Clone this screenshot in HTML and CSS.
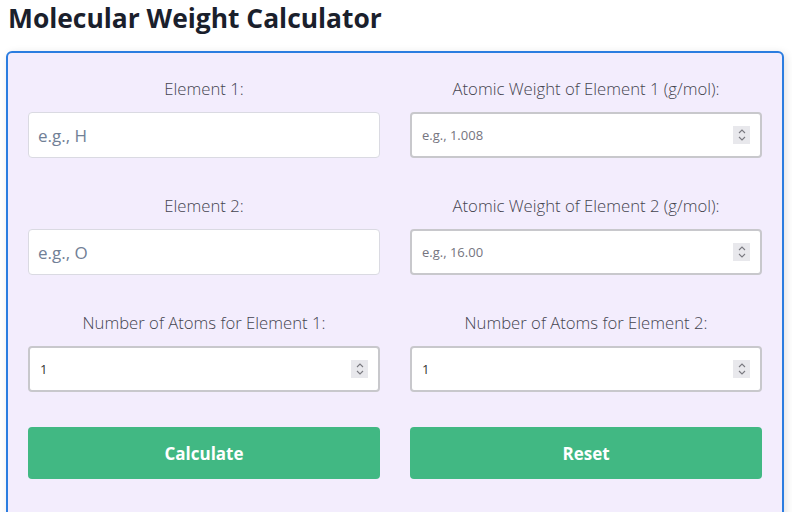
FILE: index.html
```
<!DOCTYPE html>
<html>
<head>
<meta charset="utf-8">
<link rel="stylesheet" href="styles.css">
</head>
<body>
<h1 class="title">Molecular Weight Calculator</h1>
<div class="card">
  <div class="grid">
    <div class="field">
      <label class="label">Element 1:</label>
      <input class="text-input" type="text" placeholder="e.g., H">
    </div>
    <div class="field">
      <label class="label">Atomic Weight of Element 1 (g/mol):</label>
      <div class="num-wrap">
        <input class="num-input" type="text" placeholder="e.g., 1.008">
        <span class="spin"><svg width="10" height="14" viewBox="0 0 10 14"><path d="M2 5 L5 2 L8 5 M2 9 L5 12 L8 9" fill="none" stroke="#7a7a80" stroke-width="1.1"/></svg></span>
      </div>
    </div>
    <div class="field">
      <label class="label">Element 2:</label>
      <input class="text-input" type="text" placeholder="e.g., O">
    </div>
    <div class="field">
      <label class="label">Atomic Weight of Element 2 (g/mol):</label>
      <div class="num-wrap">
        <input class="num-input" type="text" placeholder="e.g., 16.00">
        <span class="spin"><svg width="10" height="14" viewBox="0 0 10 14"><path d="M2 5 L5 2 L8 5 M2 9 L5 12 L8 9" fill="none" stroke="#7a7a80" stroke-width="1.1"/></svg></span>
      </div>
    </div>
    <div class="field">
      <label class="label">Number of Atoms for Element 1:</label>
      <div class="num-wrap">
        <input class="num-input" type="text" value="1">
        <span class="spin"><svg width="10" height="14" viewBox="0 0 10 14"><path d="M2 5 L5 2 L8 5 M2 9 L5 12 L8 9" fill="none" stroke="#7a7a80" stroke-width="1.1"/></svg></span>
      </div>
    </div>
    <div class="field">
      <label class="label">Number of Atoms for Element 2:</label>
      <div class="num-wrap">
        <input class="num-input" type="text" value="1">
        <span class="spin"><svg width="10" height="14" viewBox="0 0 10 14"><path d="M2 5 L5 2 L8 5 M2 9 L5 12 L8 9" fill="none" stroke="#7a7a80" stroke-width="1.1"/></svg></span>
      </div>
    </div>
    <button class="btn">Calculate</button>
    <button class="btn">Reset</button>
  </div>
</div>
</body>
</html>
```
FILE: styles.css
```
* { box-sizing: border-box; }
html, body { margin: 0; padding: 0; background: #ffffff; }
body { font-family: "Open Sans", "Noto Sans", sans-serif; width: 792px; height: 512px; overflow: hidden; }
.title {
  margin: 0;
  padding: 0 0 0 8px;
  height: 51px;
  line-height: 36px;
  font-size: 26.4px;
  font-weight: 700;
  color: #1a202c;
}
.card {
  margin-left: 6px;
  width: 778px;
  height: 470px;
  border: 2px solid #2b7de0;
  border-radius: 6px;
  background: #f3edfd;
  box-shadow: 2px 2px 8px rgba(0,0,0,0.12);
  padding: 24px 20px 0 20px;
}
.grid {
  display: grid;
  grid-template-columns: 352px 352px;
  column-gap: 30px;
  row-gap: 36px;
}
.field { display: flex; flex-direction: column; }
.label {
  display: block;
  text-align: center;
  font-size: 16.7px;
  line-height: 24px;
  font-weight: 300;
  color: #44444f;
  margin-bottom: 11px;
}
.text-input {
  height: 46px;
  width: 100%;
  border: 1px solid #dadae2;
  border-radius: 4px;
  background: #fff;
  padding: 0 9px;
  font-family: inherit;
  font-size: 17px;
  font-weight: 400;
  color: #333;
  outline: none;
}
.text-input::placeholder { color: #718096; }
.num-wrap { position: relative; height: 46px; }
.num-input {
  height: 46px;
  width: 100%;
  border: 2px solid #c8c8cc;
  border-radius: 4px;
  background: #fff;
  padding: 0 10px;
  font-family: inherit;
  font-size: 13px;
  color: #333;
  outline: none;
}
.num-input::placeholder { color: #757580; }
.spin {
  position: absolute;
  right: 12px;
  top: 14px;
  width: 17px;
  height: 18px;
  background: #e8e8ec;
  display: flex;
  align-items: center;
  justify-content: center;
}
.btn {
  height: 52px;
  border: none;
  border-radius: 4px;
  background: #41b883;
  color: #fff;
  font-family: inherit;
  font-size: 17px;
  font-weight: 700;
  margin-top: -1px;
}
```
